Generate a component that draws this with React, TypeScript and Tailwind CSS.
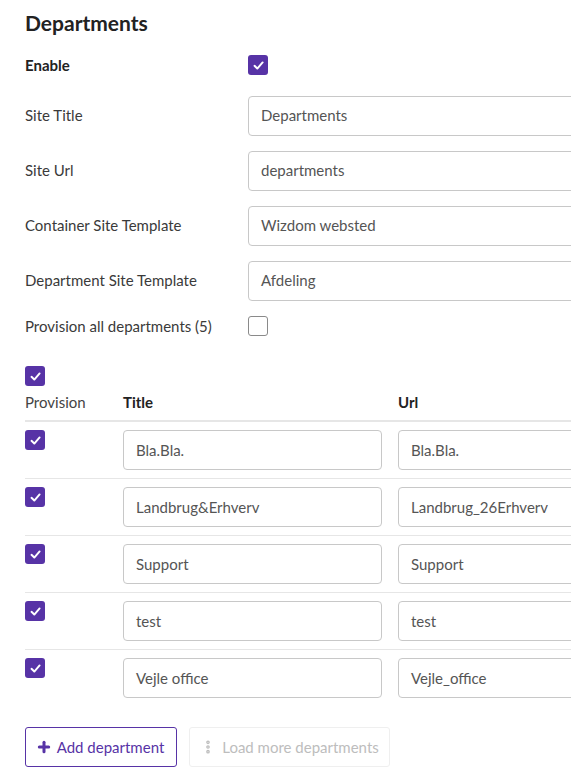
import { Plus, EllipsisVertical } from "lucide-react";

const departments = [
  { title: "Bla.Bla.", url: "Bla.Bla." },
  { title: "Landbrug&Erhverv", url: "Landbrug_26Erhverv" },
  { title: "Support", url: "Support" },
  { title: "test", url: "test" },
  { title: "Vejle office", url: "Vejle_office" },
];

const fields = [
  { label: "Site Title", value: "Departments" },
  { label: "Site Url", value: "departments" },
  { label: "Container Site Template", value: "Wizdom websted" },
  { label: "Department Site Template", value: "Afdeling" },
];

function Checkbox({ checked }: { checked: boolean }) {
  return checked ? (
    <span className="flex h-5 w-5 shrink-0 items-center justify-center rounded-[3px] bg-[#5733a6]">
      <svg viewBox="0 0 12 12" className="h-[13px] w-[13px]" fill="none" stroke="white" strokeWidth="1.8" strokeLinecap="round" strokeLinejoin="round">
        <path d="M2.3 6.3 4.9 8.8 9.8 3.2" />
      </svg>
    </span>
  ) : (
    <span className="block h-5 w-5 shrink-0 rounded-[3px] border border-[#8a8a8a] bg-white" />
  );
}

function TextBox({ value, className }: { value: string; className: string }) {
  return (
    <div className={`flex h-[40px] shrink-0 items-center rounded-[4px] border border-[#c8c8c8] bg-white px-[12px] text-[15px] text-[#555] ${className}`}>
      {value}
    </div>
  );
}

export default function App() {
  return (
    <div
      className="min-h-[781px] w-[571px] overflow-hidden bg-white pl-[25px] text-[15px] text-[#3a3a3a]"
      style={{ fontFamily: "Lato, 'Open Sans', sans-serif" }}
    >
      <h2 className="pt-[9px] text-[21px] font-bold leading-[28px] text-[#222]">Departments</h2>

      <div className="mt-[18px] flex h-5 items-center">
        <span className="w-[223px] font-bold text-[#222]">Enable</span>
        <Checkbox checked />
      </div>

      <div className="mt-[21px] flex flex-col gap-[16px]">
        {fields.map((f) => (
          <div key={f.label} className="flex h-[39px] items-center">
            <span className="w-[223px] shrink-0">{f.label}</span>
            <TextBox value={f.value} className="h-[39px] w-[400px]" />
          </div>
        ))}
      </div>

      <div className="mt-[16px] flex h-5 items-center">
        <span className="w-[223px]">Provision all departments (5)</span>
        <Checkbox checked={false} />
      </div>

      <div className="mt-[30px] w-[700px]">
        <Checkbox checked />
        <div className="flex h-[36px] items-center border-b-2 border-[#e6e6e6] pb-[2px]">
          <span className="w-[98px] shrink-0 text-[#444]">Provision</span>
          <span className="w-[275px] shrink-0 font-bold text-[#222]">Title</span>
          <span className="font-bold text-[#222]">Url</span>
        </div>
        {departments.map((d, i) => (
          <div
            key={d.url}
            className={`flex py-[8px] ${i < departments.length - 1 ? "border-b border-[#e6e6e6]" : ""}`}
          >
            <div className="w-[98px] shrink-0">
              <Checkbox checked />
            </div>
            <TextBox value={d.title} className="w-[259px]" />
            <TextBox value={d.url} className="ml-[16px] w-[259px]" />
          </div>
        ))}
      </div>

      <div className="mt-[21px] flex gap-[12px]">
        <button className="flex h-[40px] w-[152px] items-center justify-center gap-[5px] rounded-[3px] border border-[#5733a6] text-[15px] text-[#5733a6]">
          <Plus size={16} strokeWidth={4.5} className="-ml-[2px]" />
          Add department
        </button>
        <button className="flex h-[40px] w-[201px] items-center justify-center gap-[6px] rounded-[3px] border border-[#efefef] text-[15px] text-[#bdbdbd]">
          <EllipsisVertical size={16} strokeWidth={3.5} />
          Load more departments
        </button>
      </div>
    </div>
  );
}
